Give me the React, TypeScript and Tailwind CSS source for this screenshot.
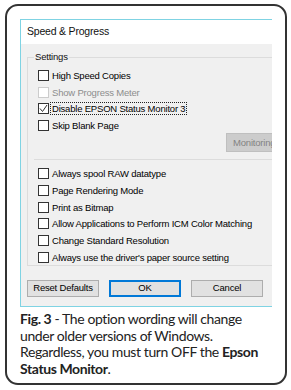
const Check = ({ checked = false, disabled = false }: { checked?: boolean; disabled?: boolean }) => (
  <div
    className={`w-[11px] h-[11px] shrink-0 border bg-white flex items-center justify-center ${
      disabled ? "border-[#cccccc]" : "border-[#333333]"
    }`}
  >
    {checked && (
      <svg width="9" height="9" viewBox="0 0 9 9">
        <path d="M1 4.5 L3.5 7.5 L8 1" fill="none" stroke="#333" strokeWidth="1" />
      </svg>
    )}
  </div>
);

const Row = ({
  label,
  checked,
  disabled,
  focus,
}: {
  label: string;
  checked?: boolean;
  disabled?: boolean;
  focus?: boolean;
}) => (
  <div className="h-[16.8px] flex items-center gap-[2px]">
    <Check checked={checked} disabled={disabled} />
    <span
      className={`leading-[11px] whitespace-nowrap px-[1px] ${disabled ? "text-[#8d8d8d]" : "text-black"} ${
        focus ? "outline outline-1 outline-dotted outline-[#222]" : ""
      }`}
    >
      {label}
    </span>
  </div>
);

const App = () => {
  return (
    <div className="w-[291px] h-[390px] bg-white pt-[4px] pl-[5px]">
      <div className="w-[282px] h-[381px] border-2 border-[#333333] rounded-[13px] pl-[13px] pt-[13px]">
        <div className="w-[252px] h-[288px] border-l border-t border-b border-[#7fd3e3] overflow-hidden flex flex-col font-['Liberation_Sans',sans-serif] text-[9.5px] tracking-[-0.2px]">
          <div className="h-[24px] bg-white pl-[6px] flex items-center text-[10.5px] text-[#111]">Speed &amp; Progress</div>
          <div className="flex-1 bg-[#f0f0f0] pl-[6px] pt-[13px]">
            <div className="relative w-[280px] h-[209px] border-t border-l border-b border-[#dcdcdc] pl-[10px] pt-[9px]">
              <span className="absolute left-[6px] top-[-7px] bg-[#f0f0f0] px-[1px] leading-[12px] text-[#111]">Settings</span>
              <Row label="High Speed Copies" />
              <Row label="Show Progress Meter" disabled />
              <Row label="Disable EPSON Status Monitor 3" checked focus />
              <Row label="Skip Blank Page" />
              <div className="h-[20px] mt-[-1px] flex">
                <div className="ml-[188px] w-[60px] h-[19px] shrink-0 bg-[#cccccc] border border-[#bfbfbf] text-[#838383] pl-[6px] flex items-center">Monitoring</div>
              </div>
              <div className="h-[1px] bg-[#dcdcdc] ml-[-4px] mt-[6px] mb-[5px]" />
              <Row label="Always spool RAW datatype" />
              <Row label="Page Rendering Mode" />
              <Row label="Print as Bitmap" />
              <Row label="Allow Applications to Perform ICM Color Matching" />
              <Row label="Change Standard Resolution" />
              <Row label="Always use the driver's paper source setting" />
            </div>
            <div className="flex gap-[10px] mt-[14px]">
              <div className="w-[72px] h-[17px] bg-[#e1e1e1] border border-[#adadad] flex items-center justify-center">Reset Defaults</div>
              <div className="w-[72px] h-[17px] bg-[#e1e1e1] border-2 border-[#0078d7] flex items-center justify-center">OK</div>
              <div className="w-[72px] h-[17px] bg-[#e1e1e1] border border-[#adadad] flex items-center justify-center">Cancel</div>
            </div>
          </div>
        </div>
        <p className="mt-[4px] font-['Lato',sans-serif] text-[14px] tracking-[-0.4px] leading-[16.5px] text-[#222]">
          <b>Fig. 3</b> - The option wording will change
          <br />
          under older versions of Windows.
          <br />
          Regardless, you must turn OFF the <b>Epson</b>
          <br />
          <b>Status Monitor</b>.
        </p>
      </div>
    </div>
  );
};

export default App;
